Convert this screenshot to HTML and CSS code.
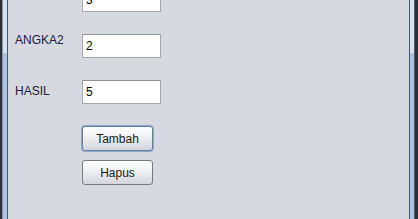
FILE: index.html
```html
<!DOCTYPE html>
<html>
<head>
  <link rel="stylesheet" href="styles.css">
</head>
<body>
  <div class="frame-left"></div>

  <div class="content">
    <form class="calc-form">
      <span class="calc-label"></span>
      <input class="calc-input" type="text" id="angka1" value="3">

      <label class="calc-label calc-label-high" for="angka2">ANGKA2</label>
      <input class="calc-input" type="text" id="angka2" value="2">

      <label class="calc-label calc-label-mid" for="hasil">HASIL</label>
      <input class="calc-input" type="text" id="hasil" value="5">

      <div class="actions">
        <button type="button" class="calc-button is-focused">Tambah</button>
        <button type="button" class="calc-button">Hapus</button>
      </div>
    </form>
  </div>

  <div class="frame-right"></div>
</body>
</html>
```

FILE: styles.css
```css
html, body {
  margin: 0;
  height: 219px;
  overflow: hidden;
}

body {
  display: flex;
  background-color: #d6d9df;
  font-family: "Liberation Sans", Arial, sans-serif;
  font-size: 12px;
}

.frame-left {
  width: 8px;
  flex: none;
  background:
    linear-gradient(to right, #2b2f38 0 2px, #8e96a2 2px 3px, transparent 3px 7px, #4f5663 7px 8px),
    linear-gradient(to bottom, #d3e1f0 0 53px, #a8c3e3 53px);
}

.frame-right {
  width: 9px;
  flex: none;
  background:
    linear-gradient(to right, #4f5663 0 1px, transparent 1px 5px, #555b65 5px 6px, #2b2f38 6px 9px),
    linear-gradient(to bottom, #d3e1f0 0 53px, #a8c3e3 53px);
}

.content {
  flex: 1;
  padding-left: 7px;
}

.calc-form {
  display: grid;
  grid-template-columns: 67px 79px;
  row-gap: 22px;
  margin-top: -12px;
}

.calc-label {
  color: #20203a;
  line-height: 14px;
  align-self: start;
}

.calc-label-high {
  margin-top: -1px;
}

.calc-label-mid {
  margin-top: 4px;
}

.calc-input {
  box-sizing: border-box;
  width: 79px;
  height: 24px;
  margin: 0;
  padding: 0 3px;
  border: 1px solid #a4a8ae;
  border-top-color: #8f939a;
  background-color: #ffffff;
  color: #000000;
  font-family: "Liberation Sans", Arial, sans-serif;
  font-size: 12px;
  outline: none;
}

.actions {
  grid-column: 2;
  display: flex;
  flex-direction: column;
  align-items: flex-start;
  gap: 9px;
}

.calc-button {
  box-sizing: border-box;
  width: 71px;
  height: 25px;
  padding: 0;
  border: 1px solid #747982;
  border-radius: 3px;
  background: linear-gradient(to bottom, #ffffff 0%, #eef0f3 45%, #d2d5db 100%);
  color: #1a1a1a;
  font-family: "Liberation Sans", Arial, sans-serif;
  font-size: 12px;
}

.calc-button.is-focused {
  border-color: #6f7d90;
  box-shadow: 0 0 0 1px #88aad6;
}
```
